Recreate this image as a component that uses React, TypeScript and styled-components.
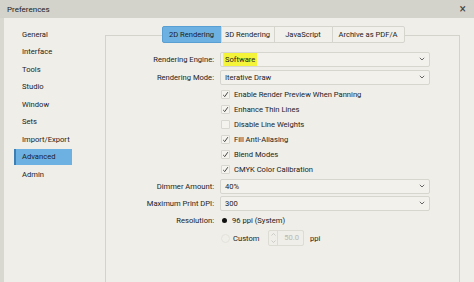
import React from "react";
import styled, { createGlobalStyle } from "styled-components";

const GlobalStyle = createGlobalStyle`
  html, body {
    margin: 0;
    padding: 0;
    background: #efeee8;
  }
  body {
    font-family: Roboto, "Noto Sans", "Liberation Sans", sans-serif;
    font-size: 7.6px;
    color: #1c1c1c;
  }
`;

const Window = styled.div`
  width: 474px;
  height: 282px;
  display: flex;
  flex-direction: column;
  background: #efeee8;
  overflow: hidden;
`;

const TitleBar = styled.div`
  height: 18px;
  flex: none;
  display: flex;
  align-items: center;
  justify-content: space-between;
  padding: 0 7px 0 7px;
  background: #d3d2cb;
  font-size: 8px;
  color: #1c1c1c;
`;

const CloseButton = styled.span`
  font-size: 12px;
  line-height: 1;
  color: #444;
  margin-right: 1px;
`;

const Body = styled.div`
  flex: 1;
  display: flex;
  border-left: 4px solid #d8d7d0;
`;

const Sidebar = styled.nav`
  width: 101px;
  box-sizing: border-box;
  flex: none;
  padding: 8px 0 0 10px;
  display: flex;
  flex-direction: column;
  gap: 1.5px;
`;

const NavItem = styled.div<{ $active?: boolean }>`
  height: 16px;
  width: 58px;
  box-sizing: border-box;
  display: flex;
  align-items: center;
  padding-left: ${(p) => (p.$active ? "6px" : "8px")};
  background: ${(p) => (p.$active ? "#6db1e2" : "transparent")};
  border-left: ${(p) => (p.$active ? "2px solid #3d7fb3" : "none")};
`;

const Main = styled.div`
  flex: 1;
  padding: 17px 14px 0 0;
  display: flex;
`;

const Frame = styled.div`
  flex: 1;
  border: 1px solid #d4d3cb;
  border-bottom: none;
  display: flex;
  flex-direction: column;
`;

const TabBar = styled.div`
  display: flex;
  justify-content: center;
  margin-top: -10px;
  margin-bottom: 7px;
  margin-left: 2px;
`;

const Tab = styled.div<{ $active?: boolean; $w: number }>`
  width: ${(p) => p.$w}px;
  height: 17px;
  box-sizing: border-box;
  display: flex;
  align-items: center;
  justify-content: center;
  border: 1px solid ${(p) => (p.$active ? "#5a9fd2" : "#d6d5cd")};
  margin-left: -1px;
  background: ${(p) => (p.$active ? "#6db1e2" : "#f1f0ea")};
  border-radius: ${(p) => (p.$active ? "2px 0 0 2px" : "0")};
  &:last-child {
    border-radius: 0 2px 2px 0;
  }
`;

const Row = styled.div<{ $h: number }>`
  height: ${(p) => p.$h}px;
  display: flex;
  align-items: center;
`;

const Label = styled.div`
  width: 108px;
  flex: none;
  text-align: right;
  padding-right: 6px;
  box-sizing: content-box;
`;

const Select = styled.div`
  width: 210px;
  height: 15px;
  box-sizing: border-box;
  border: 1px solid #d6d5ce;
  border-radius: 2px;
  background: #f2f1eb;
  display: flex;
  align-items: center;
  justify-content: space-between;
  padding: 0 4px 0 4px;
`;

const Highlight = styled.span`
  background: #f4f53a;
  padding: 2px 2px;
  margin-left: -2px;
`;

const Checkbox = styled.span`
  width: 9px;
  height: 9px;
  box-sizing: border-box;
  border: 1px solid #d8d7d0;
  border-radius: 1px;
  background: #f4f3ee;
  display: inline-flex;
  align-items: center;
  justify-content: center;
  margin-left: 115px;
  margin-right: 4px;
`;

const Radio = styled.span<{ $on?: boolean }>`
  width: 9px;
  height: 9px;
  box-sizing: border-box;
  border-radius: 50%;
  border: 1px solid ${(p) => (p.$on ? "transparent" : "#e3e2db")};
  display: inline-flex;
  align-items: center;
  justify-content: center;
  margin-left: ${(p) => (p.$on ? "0" : "115px")};
  margin-right: 3px;
  &::after {
    content: "";
    width: 5px;
    height: 5px;
    border-radius: 50%;
    background: ${(p) => (p.$on ? "#111" : "transparent")};
  }
`;

const RadioText = styled.span`
  width: 35px;
`;

const Spin = styled.div`
  width: 36px;
  height: 16px;
  box-sizing: border-box;
  border: 1px solid #dcdbd4;
  border-radius: 2px;
  display: flex;
  align-items: stretch;
  margin-right: 6px;
`;

const SpinArrows = styled.div`
  width: 8px;
  border-right: 1px solid #dcdbd4;
  display: flex;
  flex-direction: column;
  align-items: center;
  justify-content: space-around;
`;

const SpinValue = styled.div`
  flex: 1;
  text-align: right;
  padding-right: 4px;
  line-height: 14px;
  color: #b9b8b2;
`;

const Chevron = () => (
  <svg width="6" height="4" viewBox="0 0 6 4">
    <path d="M0.8 0.8 L3 3 L5.2 0.8" fill="none" stroke="#666" strokeWidth="1" />
  </svg>
);

const Check = () => (
  <svg width="7" height="7" viewBox="0 0 7 7">
    <path d="M1.2 4 L2.8 5.6 L5.8 1.2" fill="none" stroke="#333" strokeWidth="0.9" />
  </svg>
);

const Tri = ({ up }: { up?: boolean }) => (
  <svg width="5" height="3" viewBox="0 0 5 3">
    <path
      d={up ? "M0.5 2.5 L2.5 0.5 L4.5 2.5" : "M0.5 0.5 L2.5 2.5 L4.5 0.5"}
      fill="none"
      stroke="#c4c3bd"
      strokeWidth="0.8"
    />
  </svg>
);

const navItems = [
  "General",
  "Interface",
  "Tools",
  "Studio",
  "Window",
  "Sets",
  "Import/Export",
  "Advanced",
  "Admin",
];

const tabs = [
  { name: "2D Rendering", w: 60 },
  { name: "3D Rendering", w: 54 },
  { name: "JavaScript", w: 59 },
  { name: "Archive as PDF/A", w: 73 },
];

const checks = [
  { text: "Enable Render Preview When Panning", on: true, h: 16 },
  { text: "Enhance Thin Lines", on: true, h: 15 },
  { text: "Disable Line Weights", on: false, h: 15 },
  { text: "Fill Anti-Aliasing", on: true, h: 15 },
  { text: "Blend Modes", on: true, h: 15 },
  { text: "CMYK Color Calibration", on: true, h: 15 },
];

export default function App() {
  return (
    <>
      <GlobalStyle />
      <Window>
        <TitleBar>
          <span>Preferences</span>
          <CloseButton>×</CloseButton>
        </TitleBar>
        <Body>
          <Sidebar>
            {navItems.map((n) => (
              <NavItem key={n} $active={n === "Advanced"}>
                {n}
              </NavItem>
            ))}
          </Sidebar>
          <Main>
            <Frame>
              <TabBar>
                {tabs.map((t, i) => (
                  <Tab key={t.name} $w={t.w} $active={i === 0}>
                    {t.name}
                  </Tab>
                ))}
              </TabBar>
              <Row $h={18}>
                <Label>Rendering Engine:</Label>
                <Select>
                  <Highlight>Software</Highlight>
                  <Chevron />
                </Select>
              </Row>
              <Row $h={18}>
                <Label>Rendering Mode:</Label>
                <Select>
                  <span>Iterative Draw</span>
                  <Chevron />
                </Select>
              </Row>
              {checks.map((c) => (
                <Row key={c.text} $h={c.h}>
                  <Checkbox>{c.on && <Check />}</Checkbox>
                  <span>{c.text}</span>
                </Row>
              ))}
              <Row $h={18}>
                <Label>Dimmer Amount:</Label>
                <Select>
                  <span>40%</span>
                  <Chevron />
                </Select>
              </Row>
              <Row $h={16}>
                <Label>Maximum Print DPI:</Label>
                <Select>
                  <span>300</span>
                  <Chevron />
                </Select>
              </Row>
              <Row $h={18}>
                <Label>Resolution:</Label>
                <Radio $on />
                <span>96 ppi (System)</span>
              </Row>
              <Row $h={18}>
                <Radio />
                <RadioText>Custom</RadioText>
                <Spin>
                  <SpinArrows>
                    <Tri up />
                    <Tri />
                  </SpinArrows>
                  <SpinValue>50.0</SpinValue>
                </Spin>
                <span>ppi</span>
              </Row>
            </Frame>
          </Main>
        </Body>
      </Window>
    </>
  );
}
